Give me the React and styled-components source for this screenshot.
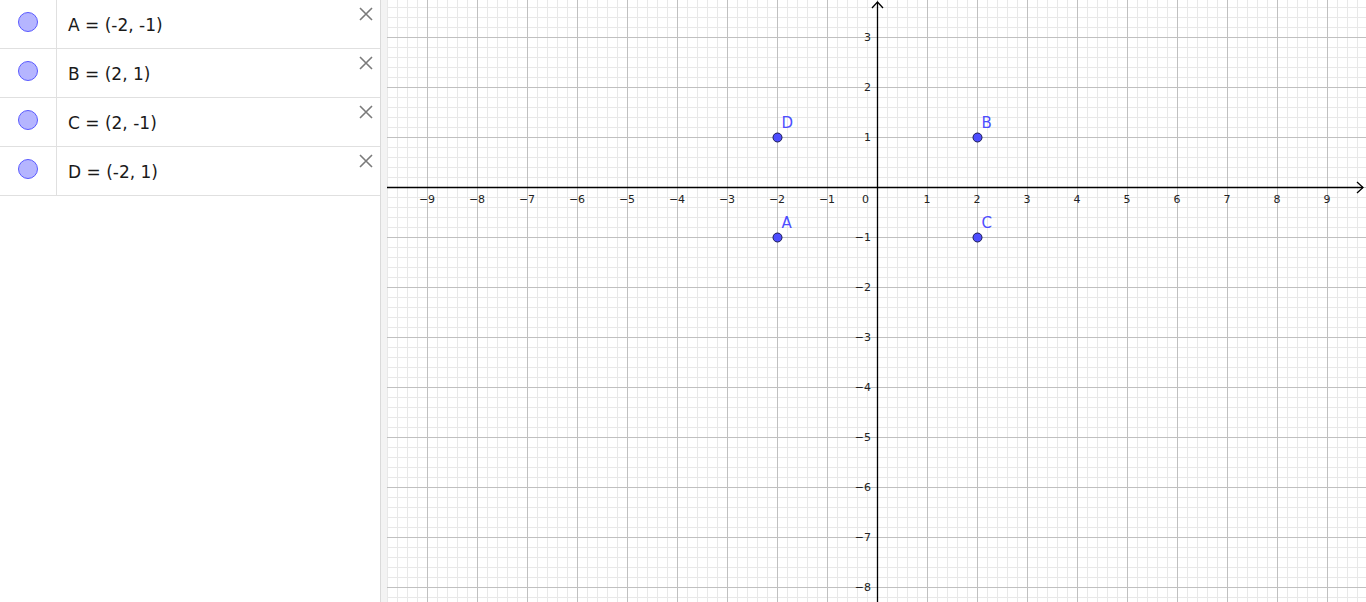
import React from "react";
import styled, { createGlobalStyle } from "styled-components";

const GlobalStyle = createGlobalStyle`
  html, body {
    margin: 0;
    padding: 0;
    background: #fff;
    font-family: "DejaVu Sans", "Liberation Sans", sans-serif;
    overflow: hidden;
  }
`;

const Shell = styled.div`
  display: flex;
  width: 1366px;
  height: 602px;
`;

const AlgebraPanel = styled.div`
  width: 380px;
  flex-shrink: 0;
  border-right: 1px solid #dadada;
  background: #fff;
`;

const Divider = styled.div`
  width: 6px;
  flex-shrink: 0;
  background: #f3f3f3;
`;

const Row = styled.div`
  display: flex;
  height: 48px;
  border-bottom: 1px solid #e0e0e0;
`;

const MarkerCell = styled.div`
  width: 57px;
  flex-shrink: 0;
  border-right: 1px solid #e0e0e0;
  display: flex;
  justify-content: center;
  align-items: flex-start;
  padding-top: 12px;
  box-sizing: border-box;
`;

const Marker = styled.span`
  width: 18px;
  height: 18px;
  border-radius: 50%;
  background: #b5b5ff;
  border: 1px solid #5a5aff;
`;

const Definition = styled.div`
  flex: 1;
  padding: 15px 0 0 11px;
  font-size: 17px;
  color: #1a1a1a;
  white-space: pre;
`;

const CloseButton = styled.button`
  align-self: flex-start;
  margin: 6px 6px 0 0;
  padding: 0;
  width: 16px;
  height: 16px;
  border: none;
  background: none;
  display: flex;
  align-items: center;
  justify-content: center;
`;

const Graphics = styled.div`
  flex: 1;
  position: relative;
  overflow: hidden;
`;

const points = [
  { name: "A", x: -2, y: -1, def: "A = (-2, -1)" },
  { name: "B", x: 2, y: 1, def: "B = (2, 1)" },
  { name: "C", x: 2, y: -1, def: "C = (2, -1)" },
  { name: "D", x: -2, y: 1, def: "D = (-2, 1)" },
];

const W = 979;
const H = 602;
const OX = 490;
const OY = 187;
const U = 50;

function GraphView() {
  const minor = [];
  const major = [];
  for (let x = OX % 10; x <= W; x += 10) {
    const k = (x - OX) / 10;
    (k % 5 === 0 ? major : minor).push(
      <line key={"v" + x} x1={x + 0.5} y1={0} x2={x + 0.5} y2={H} />
    );
  }
  for (let y = OY % 10; y <= H; y += 10) {
    const k = (y - OY) / 10;
    (k % 5 === 0 ? major : minor).push(
      <line key={"h" + y} x1={0} y1={y + 0.5} x2={W} y2={y + 0.5} />
    );
  }

  const xLabels = [];
  for (let i = -9; i <= 9; i++) {
    if (i === 0) continue;
    xLabels.push(
      <text key={"xl" + i} x={OX + i * U} y={OY + 16} textAnchor="middle">
        {i < 0 ? "\u2212" + -i : i}
      </text>
    );
  }
  const yLabels = [];
  for (let j = -8; j <= 3; j++) {
    if (j === 0) continue;
    yLabels.push(
      <text key={"yl" + j} x={OX - 6} y={OY - j * U + 4} textAnchor="end">
        {j < 0 ? "\u2212" + -j : j}
      </text>
    );
  }

  return (
    <svg width={W} height={H} style={{ display: "block" }}>
      <g stroke="#e8e8e8" strokeWidth="1">{minor}</g>
      <g stroke="#c0c0c0" strokeWidth="1">{major}</g>
      <g stroke="#000" strokeWidth="1.3" fill="none">
        <line x1={0} y1={OY + 0.5} x2={W - 3} y2={OY + 0.5} />
        <polyline points={`${W - 9},${OY - 5} ${W - 3},${OY + 0.5} ${W - 9},${OY + 6}`} />
        <line x1={OX + 0.5} y1={2} x2={OX + 0.5} y2={H} />
        <polyline points={`${OX - 5},${8} ${OX + 0.5},${2} ${OX + 6},${8}`} />
      </g>
      <g fontFamily="'DejaVu Sans', sans-serif" fontSize="11" fill="#222">
        {xLabels}
        {yLabels}
        <text x={OX - 8} y={OY + 16} textAnchor="end">0</text>
      </g>
      {points.map((p) => {
        const cx = OX + p.x * U + 0.5;
        const cy = OY - p.y * U + 0.5;
        return (
          <g key={p.name}>
            <circle cx={cx} cy={cy} r="4.5" fill="#4d4dff" stroke="#1a1a55" strokeWidth="1" />
            <text
              x={cx + 4}
              y={cy - 10}
              fill="#4d4dff"
              fontSize="15"
              fontFamily="'DejaVu Sans', sans-serif"
            >
              {p.name}
            </text>
          </g>
        );
      })}
    </svg>
  );
}

function CloseIcon() {
  return (
    <svg width="14" height="14" viewBox="0 0 14 14">
      <path d="M1 1 L13 13 M13 1 L1 13" stroke="#7a7a7a" strokeWidth="1.6" />
    </svg>
  );
}

export default function App() {
  return (
    <>
      <GlobalStyle />
      <Shell>
        <AlgebraPanel>
          {points.map((p) => (
            <Row key={p.name}>
              <MarkerCell>
                <Marker />
              </MarkerCell>
              <Definition>{p.def}</Definition>
              <CloseButton aria-label="Delete">
                <CloseIcon />
              </CloseButton>
            </Row>
          ))}
        </AlgebraPanel>
        <Divider />
        <Graphics>
          <GraphView />
        </Graphics>
      </Shell>
    </>
  );
}
